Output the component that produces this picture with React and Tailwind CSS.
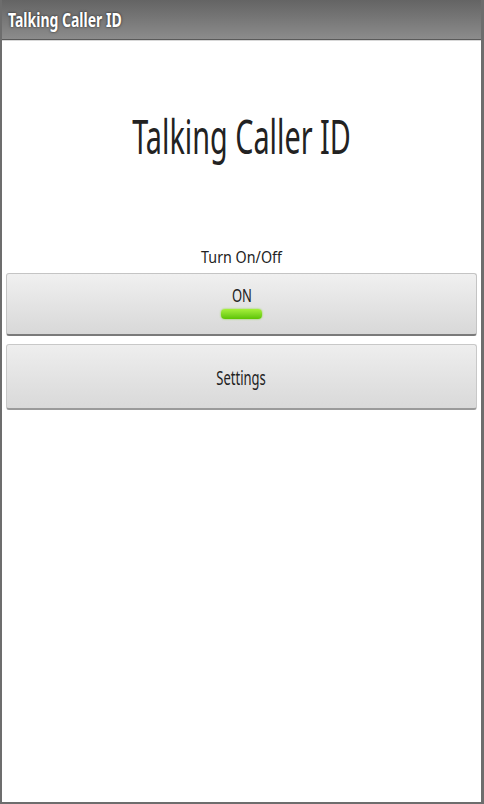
import React, { useState } from 'react';

const font = { fontFamily: '"Noto Sans", "Open Sans", sans-serif' };

const App = () => {
  const [on, setOn] = useState(true);

  return (
    <div
      className="w-[484px] h-[804px] bg-[#6d6d6d] pl-[2px] pr-[3px] pb-[2px] flex flex-col"
      style={font}
    >
      {/* Title bar */}
      <div className="h-[40px] shrink-0 bg-gradient-to-b from-[#646464] to-[#8c8c8c] border-b border-[#5a5a5a] flex items-center pl-[6px]">
        <span className="text-white font-bold text-[20px] leading-[24px] [text-shadow:0_0_3px_rgba(0,0,0,0.8)] origin-left scale-x-[0.7]">
          Talking Caller ID
        </span>
      </div>

      {/* Content */}
      <div className="flex-1 bg-white border-t border-[#d8d8d8] flex flex-col">
        <div className="h-[67px] shrink-0" />
        <h1 className="text-center text-[#222] text-[48px] leading-[56px] scale-x-[0.6]">
          Talking Caller ID
        </h1>
        <div className="h-[81px] shrink-0" />
        <p className="text-center text-[#222] text-[17px] leading-[24px] scale-x-[0.84]">
          Turn On/Off
        </p>

        <div className="px-[4px] mt-[4px] flex flex-col gap-[8px]">
          <button
            onClick={() => setOn(!on)}
            className="h-[63px] rounded-[3px] border border-[#c4c4c4] border-b-[2px] border-b-[#7a7a7a] bg-gradient-to-b from-[#f0f0f0] to-[#d8d8d8] flex flex-col items-center justify-start pt-[10px]"
          >
            <span className="text-[#222] text-[18px] leading-[22px] scale-x-[0.72]">
              {on ? 'ON' : 'OFF'}
            </span>
            <span
              className={`mt-[3px] w-[41px] h-[10px] rounded-[4px] ${
                on
                  ? 'bg-gradient-to-b from-[#a6f03a] to-[#5cc400] shadow-[0_0_2px_#7ed321]'
                  : 'bg-gradient-to-b from-[#bbb] to-[#888]'
              }`}
            />
          </button>

          <button className="h-[66px] rounded-[3px] border border-[#c8c8c8] border-b-[2px] border-b-[#9a9a9a] bg-gradient-to-b from-[#eeeeee] to-[#d9d9d9] flex items-center justify-center pt-[2px]">
            <span className="text-[#222] text-[20px] leading-[24px] scale-x-[0.65]">Settings</span>
          </button>
        </div>
      </div>
    </div>
  );
};

export default App;
